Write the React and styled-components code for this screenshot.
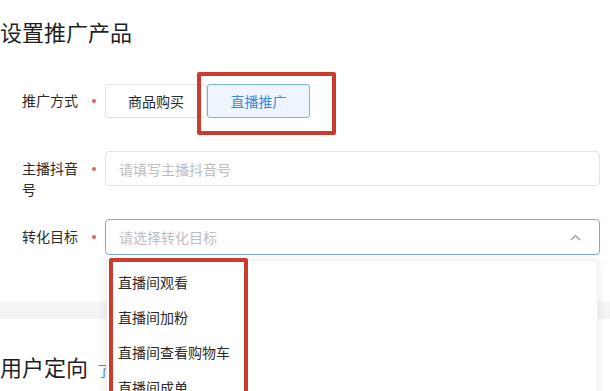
import React from 'react'
import styled, { createGlobalStyle } from 'styled-components'

const GlobalStyle = createGlobalStyle`
  html, body {
    margin: 0;
    padding: 0;
    background: #f4f4f5;
  }
  body {
    font-family: "Noto Sans CJK SC", "Noto Sans", "Liberation Sans", sans-serif;
    color: #333;
    overflow: hidden;
  }
`

const Page = styled.div`
  width: 610px;
  height: 391px;
  overflow: hidden;
`

const Section = styled.section`
  background: #fff;
  padding: ${p => p.pad};
  margin-bottom: ${p => p.gap || 0}px;
`

const Title = styled.h2`
  margin: 0;
  font-size: 22px;
  font-weight: 400;
  line-height: 30px;
  color: #1f1f1f;
  display: flex;
  align-items: baseline;
`

const TitleLink = styled.a`
  font-size: 14px;
  color: #3d8ae0;
  margin-left: 9px;
  text-decoration: none;
`

const Form = styled.div`
  margin-top: 38px;
  padding-right: 10px;
`

const Row = styled.div`
  display: flex;
  align-items: flex-start;
  height: ${p => p.h}px;
  margin-bottom: 33px;
  &:last-child {
    margin-bottom: 0;
  }
`

const Label = styled.div`
  width: 83px;
  flex: none;
  display: flex;
  align-items: flex-start;
  padding-left: 22px;
  padding-top: ${p => p.top}px;
  font-size: 14px;
  line-height: 21px;
  color: #2b2b2b;
`

const LabelText = styled.span`
  width: 60px;
  flex: none;
`

const Required = styled.span`
  width: 4px;
  height: 4px;
  border-radius: 50%;
  background: #d9656a;
  margin: 9px 0 0 10px;
  flex: none;
`

const RadioGroup = styled.div`
  position: relative;
  display: flex;
  align-items: center;
`

const RadioButton = styled.div`
  width: ${p => p.w}px;
  height: 34px;
  box-sizing: border-box;
  display: flex;
  align-items: center;
  justify-content: center;
  font-size: 14px;
  border: 1px solid ${p => (p.active ? '#7fb0ea' : '#e2e2e2')};
  background: ${p => (p.active ? '#eef5fe' : '#fff')};
  color: ${p => (p.active ? '#3d8ae0' : '#2b2b2b')};
  border-radius: 3px;
`

const Annotation = styled.div`
  position: absolute;
  left: ${p => p.x}px;
  top: ${p => p.y}px;
  width: ${p => p.w}px;
  height: ${p => p.h}px;
  border: 4px solid #cc3b2f;
  box-sizing: border-box;
  border-radius: 2px;
  pointer-events: none;
  z-index: 5;
`

const Input = styled.div`
  flex: 1;
  height: ${p => p.h}px;
  box-sizing: border-box;
  border: 1px solid ${p => (p.focus ? '#7aa8e4' : '#e3e3e3')};
  border-radius: 4px;
  display: flex;
  align-items: center;
  justify-content: space-between;
  padding: 0 18px 0 13px;
  font-size: 14px;
  color: #bdbdbd;
  position: relative;
  background: #fff;
`

const Dropdown = styled.div`
  position: absolute;
  left: 0;
  top: 40px;
  width: 490px;
  background: #fff;
  box-shadow: 0 2px 8px rgba(0, 0, 0, 0.1);
  border: 1px solid #f1f0ea;
  padding-top: 4px;
  z-index: 4;
`

const Option = styled.div`
  height: 35px;
  line-height: 35px;
  padding-left: 11px;
  font-size: 14px;
  color: #2b2b2b;
`

const Chevron = () => (
  <svg width="11" height="7" viewBox="0 0 11 7">
    <path d="M1 6 L5.5 1.5 L10 6" fill="none" stroke="#999" strokeWidth="1.2" />
  </svg>
)

const options = ['直播间观看', '直播间加粉', '直播间查看购物车', '直播间成单', '直播间停留']

export default function App() {
  return (
    <Page>
      <GlobalStyle />
      <Section pad="16px 0 47px 0" gap={17}>
        <Title>设置推广产品</Title>
        <Form>
          <Row h={34}>
            <Label top={6}>
              <LabelText>推广方式</LabelText>
              <Required />
            </Label>
            <RadioGroup>
              <RadioButton w={102}>商品购买</RadioButton>
              <RadioButton w={103} active>直播推广</RadioButton>
              <Annotation x={92} y={-12} w={139} h={63} />
            </RadioGroup>
          </Row>
          <Row h={35}>
            <Label top={7}>
              <LabelText>主播抖音号</LabelText>
              <Required />
            </Label>
            <Input h={35}>请填写主播抖音号</Input>
          </Row>
          <Row h={36}>
            <Label top={7}>
              <LabelText>转化目标</LabelText>
              <Required />
            </Label>
            <Input h={36} focus>
              请选择转化目标
              <Chevron />
              <Dropdown>
                {options.map(o => (
                  <Option key={o}>{o}</Option>
                ))}
              </Dropdown>
              <Annotation x={3} y={38} w={139} h={160} />
            </Input>
          </Row>
        </Form>
      </Section>
      <Section pad="32px 0 40px 0">
        <Title>
          用户定向
          <TitleLink>了解详情</TitleLink>
        </Title>
      </Section>
    </Page>
  )
}
